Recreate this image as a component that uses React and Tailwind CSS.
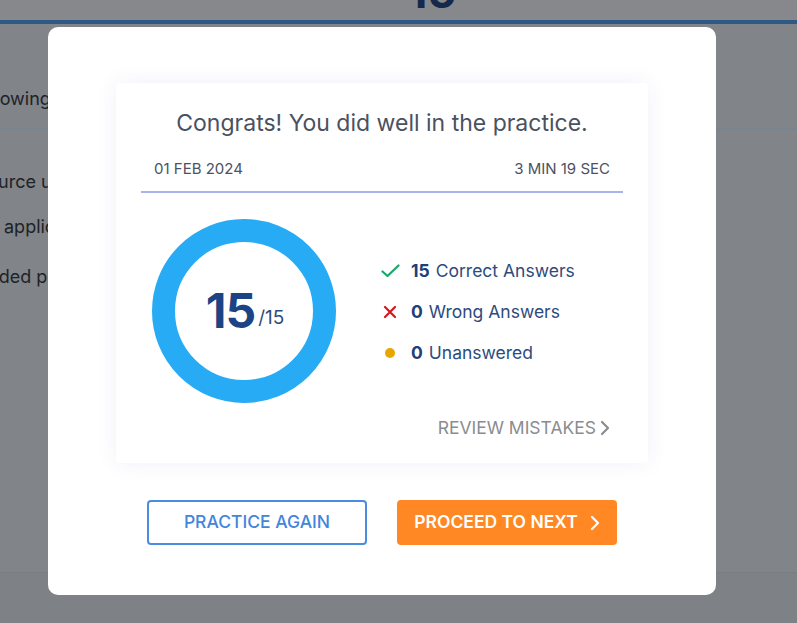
import React from "react";

const Donut = () => (
    <div className="relative w-[184px] h-[184px] shrink-0">
        <svg width="184" height="184" viewBox="0 0 184 184" className="absolute inset-0">
            <circle cx="92" cy="92" r="80.5" fill="none" stroke="#27abf5" strokeWidth="23" />
        </svg>
        <div className="absolute inset-0 flex items-center justify-center pl-[2px]">
            <span className="text-[48px] font-bold leading-none text-[#1c4484] tracking-[-1px]">15</span>
            <span className="text-[19px] leading-none text-[#2f4c7c] ml-[3px] mt-[12px]">/15</span>
        </div>
    </div>
);

const LegendRow = ({ icon, count, label }) => (
    <div className="flex items-center h-[24px]">
        <div className="w-[30px] flex items-center justify-start">{icon}</div>
        <span className="text-[17.5px] font-bold text-[#1f3f78]">{count}</span>
        <span className="text-[17.5px] text-[#2d4b7e] ml-[6px]">{label}</span>
    </div>
);

const Chevron = ({ className, stroke }) => (
    <svg width="10" height="16" viewBox="0 0 10 16" className={className}>
        <path d="M2 2 L8 8 L2 14" fill="none" stroke={stroke} strokeWidth="2.2" strokeLinecap="round" strokeLinejoin="round" />
    </svg>
);

export default function App() {
    return (
        <div
            className="relative w-[797px] h-[623px] overflow-hidden bg-[#818489]"
            style={{ fontFamily: "Inter, 'Noto Sans', sans-serif" }}
        >
            {/* page behind the overlay */}
            <div className="h-[24px] bg-[#86888c] border-b-4 border-[#2e5886] relative overflow-hidden">
                <div className="absolute left-[408px] top-[-31px] text-[45px] font-bold text-[#14294b] leading-none">
                    15
                </div>
            </div>
            <div className="h-[106px] border-b-2 border-[#7a8491] flex items-end pb-[16px] overflow-hidden">
                <span className="text-[18px] text-[#202226] ml-[-26px] whitespace-nowrap">following</span>
            </div>
            <div className="flex flex-col pt-[38px] text-[18px] leading-[28px] text-[#202226] h-[442px] overflow-hidden whitespace-nowrap">
                <span className="ml-[-44px]">Resource used</span>
                <span className="ml-[4px] mt-[17px]">applications</span>
                <span className="ml-[-42px] mt-[22px]">Included parts</span>
            </div>
            <div className="h-[51px] bg-[#7e8186] border-t border-[#7a7d82]" />

            {/* modal */}
            <div className="absolute left-[48px] top-[27px] w-[668px] h-[568px] bg-white rounded-[10px] pt-[56px] px-[68px] flex flex-col">
                <div className="bg-white rounded-[4px] shadow-[0_0_22px_rgba(40,60,160,0.07)] px-[25px] pt-[26px] pb-[25px] flex flex-col">
                    <div className="text-[23px] leading-[28px] text-center text-[#4a5161]">
                        Congrats! You did well in the practice.
                    </div>
                    <div className="mt-[22px] px-[13px] pb-[12px] flex justify-between text-[15px] leading-[20px] text-[#4b5263]">
                        <span>01 FEB 2024</span>
                        <span>3 MIN 19 SEC</span>
                    </div>
                    <div className="h-[2px] bg-[#a9b4ee]" />
                    <div className="mt-[26px] flex items-center">
                        <div className="ml-[11px]">
                            <Donut />
                        </div>
                        <div className="ml-[45px] flex flex-col gap-[17px] mt-[2px]">
                            <LegendRow
                                icon={
                                    <svg width="19" height="14" viewBox="0 0 19 14">
                                        <path d="M1.5 7.5 L6.5 12 L17.5 1.5" fill="none" stroke="#17a86b" strokeWidth="2.2" strokeLinecap="round" strokeLinejoin="round" />
                                    </svg>
                                }
                                count="15"
                                label="Correct Answers"
                            />
                            <LegendRow
                                icon={
                                    <svg width="14" height="14" viewBox="0 0 14 14" className="ml-[2px]">
                                        <path d="M2 2 L12 12 M12 2 L2 12" fill="none" stroke="#d8161b" strokeWidth="2.2" strokeLinecap="round" />
                                    </svg>
                                }
                                count="0"
                                label="Wrong Answers"
                            />
                            <LegendRow
                                icon={<div className="w-[10px] h-[10px] rounded-full bg-[#e8a600] ml-[4px]" />}
                                count="0"
                                label="Unanswered"
                            />
                        </div>
                    </div>
                    <div className="mt-[15px] flex justify-end items-center pr-[13px] text-[17.5px] leading-[20px] text-[#8a8c90]">
                        <span>REVIEW MISTAKES</span>
                        <Chevron className="ml-[4px]" stroke="#8a8c90" />
                    </div>
                </div>

                <div className="mt-[37px] flex justify-center gap-[30px]">
                    <button className="w-[220px] h-[45px] border-2 border-[#4a8de0] rounded-[4px] text-[17.5px] font-medium text-[#3f86dc]">
                        PRACTICE AGAIN
                    </button>
                    <button className="w-[220px] h-[45px] bg-[#ff8824] rounded-[4px] text-[17.5px] font-semibold text-white flex items-center justify-center">
                        <span>PROCEED TO NEXT</span>
                        <Chevron className="ml-[12px]" stroke="#ffffff" />
                    </button>
                </div>
            </div>
        </div>
    );
}
